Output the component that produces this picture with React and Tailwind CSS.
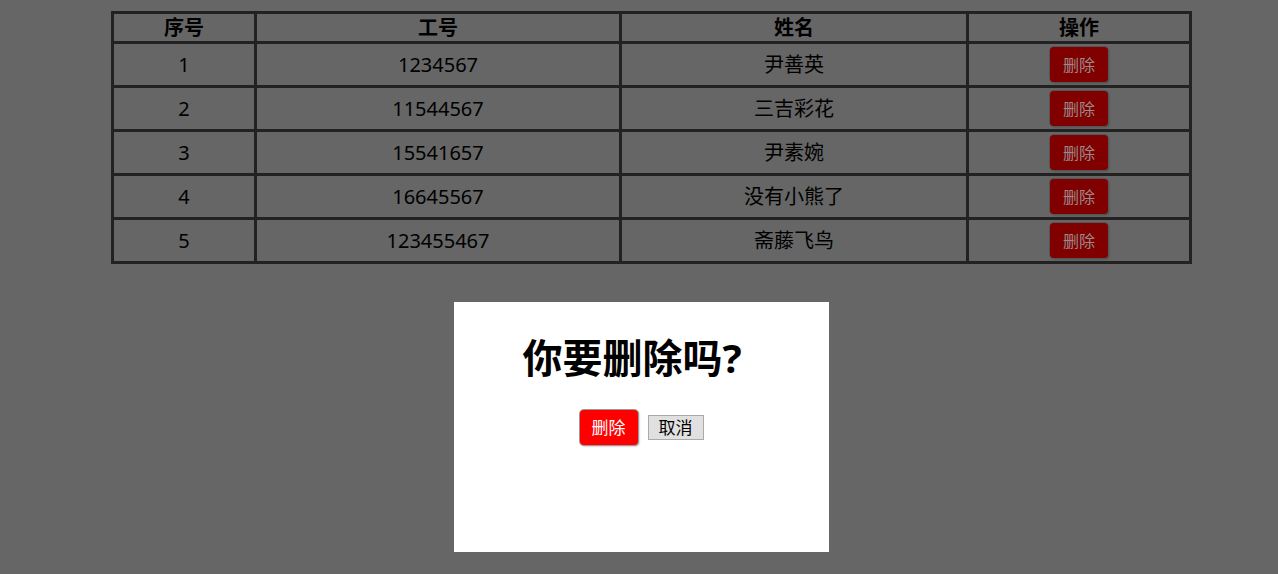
import React from "react";

const rows = [
  ["1", "1234567", "尹善英"],
  ["2", "11544567", "三吉彩花"],
  ["3", "15541657", "尹素婉"],
  ["4", "16645567", "没有小熊了"],
  ["5", "123455467", "斋藤飞鸟"],
];

export default function App() {
  return (
    <div
      className="w-[1278px] h-[574px] bg-[#666666] overflow-hidden pt-[11px]"
      style={{ fontFamily: '"Noto Sans", "Noto Sans CJK SC", sans-serif' }}
    >
      <table className="ml-[111px] w-[1078px] border-collapse border-[3px] border-[#222222] text-black table-fixed">
        <colgroup>
          <col className="w-[143px]" />
          <col className="w-[365px]" />
          <col className="w-[347px]" />
          <col className="w-[223px]" />
        </colgroup>
        <thead>
          <tr className="h-[30px]">
            <th className="border-[3px] border-[#222222] text-[20px] font-bold leading-[27px] p-0">序号</th>
            <th className="border-[3px] border-[#222222] text-[20px] font-bold leading-[27px] p-0">工号</th>
            <th className="border-[3px] border-[#222222] text-[20px] font-bold leading-[27px] p-0">姓名</th>
            <th className="border-[3px] border-[#222222] text-[20px] font-bold leading-[27px] p-0">操作</th>
          </tr>
        </thead>
        <tbody>
          {rows.map((r) => (
            <tr key={r[0]} className="h-[44px]">
              <td className="border-[3px] border-[#222222] text-center text-[20px] p-0">{r[0]}</td>
              <td className="border-[3px] border-[#222222] text-center text-[20px] p-0">{r[1]}</td>
              <td className="border-[3px] border-[#222222] text-center text-[20px] p-0">{r[2]}</td>
              <td className="border-[3px] border-[#222222] text-center p-0">
                <button className="w-[58px] h-[35px] rounded-[4px] bg-[#800000] text-[#9a8a8a] text-[16px] shadow-[0_0_0_1px_#555,1px_1px_2px_#444] align-middle">
                  删除
                </button>
              </td>
            </tr>
          ))}
        </tbody>
      </table>

      <div className="ml-[454px] mt-[38px] w-[375px] h-[250px] bg-white flex flex-col items-center">
        <h1 className="mt-[30px] pr-[19px] text-[40px] font-bold leading-[52px] text-black">你要删除吗?</h1>
        <div className="mt-[26px] flex items-center gap-[10px]">
          <button className="w-[58px] h-[35px] rounded-[4px] bg-[#ff0000] text-white text-[17px] shadow-[0_0_0_1px_#999,1px_1px_2px_#888]">
            删除
          </button>
          <button className="w-[56px] h-[25px] bg-[#e0e0e0] border border-[#aaaaaa] text-black text-[17px] leading-[22px]">
            取消
          </button>
        </div>
      </div>
    </div>
  );
}
